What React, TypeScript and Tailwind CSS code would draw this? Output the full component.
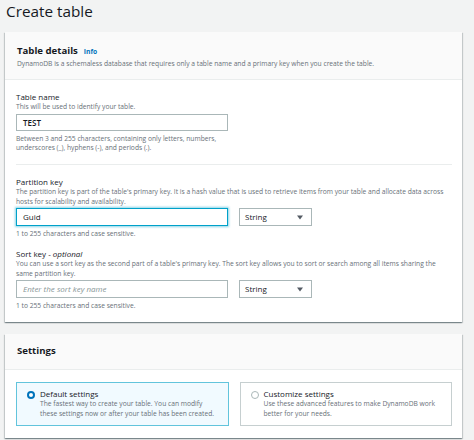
import React from 'react';

const FONT = {fontFamily: '"Open Sans", "Noto Sans", Arial, sans-serif'};

const cardShadow =
    "shadow-[0_1px_1px_0_rgba(0,28,36,0.3),1px_1px_1px_0_rgba(0,28,36,0.15),-1px_1px_1px_0_rgba(0,28,36,0.15)]";

const Caret = () => (
    <svg width="6" height="5" viewBox="0 0 6 5">
        <path d="M0 0.5 H6 L3 4.5 Z" fill="#545b64"/>
    </svg>
);

const TypeSelect = () => (
    <div className="w-[73px] h-full flex items-center justify-between pl-[5px] pr-[8px] border border-[#aab7b8] bg-white text-[8px] text-[#16191f]">
        <span>String</span>
        <Caret/>
    </div>
);

const RadioTile = ({selected, title, text}: { selected: boolean; title: string; text: string[] }) => (
    <div
        className={
            "flex-1 flex gap-[5px] pl-[10px] pt-[6px] pb-[7px] border " +
            (selected ? "bg-[#f1faff] border-[#62c4dc]" : "bg-white border-[#c6cfd0]")
        }>
        <div className="pt-[1.5px]">
            {selected ? (
                <div className="w-[8px] h-[8px] rounded-full border-[2.5px] border-[#0073bb] bg-white"/>
            ) : (
                <div className="w-[8px] h-[8px] rounded-full border border-[#aab7b8] bg-white"/>
            )}
        </div>
        <div className="flex flex-col whitespace-nowrap">
            <div className="text-[8px] leading-[10px] text-[#16191f]">{title}</div>
            {text.map((t) => (
                <div key={t} className="text-[6.7px] leading-[9.5px] text-[#687078]">{t}</div>
            ))}
        </div>
    </div>
);

const App = () => {
    return (
        <div style={FONT} className="w-[474px] h-[440px] bg-[#f2f3f3] overflow-hidden whitespace-nowrap">
            <div className="pl-[5px] w-[462px]">
                <h1 className="h-[32px] pl-[1px] text-[15.3px] leading-[22px] text-[#16191f]">Create table</h1>

                {/* Table details */}
                <div className={"bg-white " + cardShadow}>
                    <div className="bg-[#fafafa] border-b border-[#eaeded] pl-[12px] pt-[12px] pb-[10px]">
                        <div className="flex items-baseline gap-[6px] leading-[14px]">
                            <span className="text-[9.6px] font-bold text-[#16191f]">Table details</span>
                            <span className="text-[6.7px] font-bold text-[#0073bb]">Info</span>
                        </div>
                        <div className="text-[6.7px] leading-[10px] text-[#687078]">
                            DynamoDB is a schemaless database that requires only a table name and a primary key when you create the table.
                        </div>
                    </div>

                    <div className="pl-[11px] pr-[10px] pt-[12px] pb-[12px]">
                        <div className="text-[8px] leading-[10px] text-[#16191f]">Table name</div>
                        <div className="text-[6.7px] leading-[10px] text-[#687078]">This will be used to identify your table.</div>
                        <div className="mt-[2px] w-[212px] h-[17px] border border-[#aab7b8] flex items-center pl-[6px] text-[8px] font-semibold text-[#16191f]">
                            TEST
                        </div>
                        <div className="mt-[3px] text-[6.7px] leading-[9px] text-[#687078]">
                            <div>Between 3 and 255 characters, containing only letters, numbers,</div>
                            <div>underscores (_), hyphens (-), and periods (.).</div>
                        </div>

                        <div className="mt-[12px] h-px bg-[#eaeded]"/>

                        <div className="mt-[12px] text-[8px] leading-[10px] text-[#16191f]">Partition key</div>
                        <div className="text-[6.7px] leading-[9.5px] text-[#687078]">
                            <div>The partition key is part of the table's primary key. It is a hash value that is used to retrieve items from your table and allocate data across</div>
                            <div>hosts for scalability and availability.</div>
                        </div>
                        <div className="mt-[2px] h-[18px] flex gap-[11px]">
                            <div className="w-[212px] h-full border border-[#00a1c9] shadow-[0_0_2px_1px_rgba(0,161,201,0.45)] flex items-center pl-[6px] text-[8px] text-[#16191f]">
                                Guid
                            </div>
                            <TypeSelect/>
                        </div>
                        <div className="mt-[3px] text-[6.7px] leading-[9px] text-[#687078]">1 to 255 characters and case sensitive.</div>

                        <div className="mt-[11px] text-[8px] leading-[10px] text-[#16191f]">
                            Sort key - <span className="italic">optional</span>
                        </div>
                        <div className="text-[6.7px] leading-[10px] text-[#687078]">
                            <div>You can use a sort key as the second part of a table's primary key. The sort key allows you to sort or search among all items sharing the</div>
                            <div>same partition key.</div>
                        </div>
                        <div className="mt-[1px] h-[18px] flex gap-[11px]">
                            <div className="w-[212px] h-full border border-[#aab7b8] flex items-center pl-[6px] text-[8px] italic text-[#879596]">
                                Enter the sort key name
                            </div>
                            <TypeSelect/>
                        </div>
                        <div className="mt-[3px] text-[6.7px] leading-[9px] text-[#687078]">1 to 255 characters and case sensitive.</div>
                    </div>
                </div>

                {/* Settings */}
                <div className={"mt-[12px] bg-white " + cardShadow}>
                    <div className="h-[36px] bg-[#fafafa] border-b border-[#eaeded] pl-[12px] flex items-center">
                        <span className="text-[9.6px] font-bold text-[#16191f]">Settings</span>
                    </div>
                    <div className="pl-[11px] pr-[10px] py-[12px] flex gap-[11px]">
                        <RadioTile
                            selected
                            title="Default settings"
                            text={["The fastest way to create your table. You can modify", "these settings now or after your table has been created."]}
                        />
                        <RadioTile
                            selected={false}
                            title="Customize settings"
                            text={["Use these advanced features to make DynamoDB work", "better for your needs."]}
                        />
                    </div>
                </div>
            </div>
        </div>
    );
};

export default App;
